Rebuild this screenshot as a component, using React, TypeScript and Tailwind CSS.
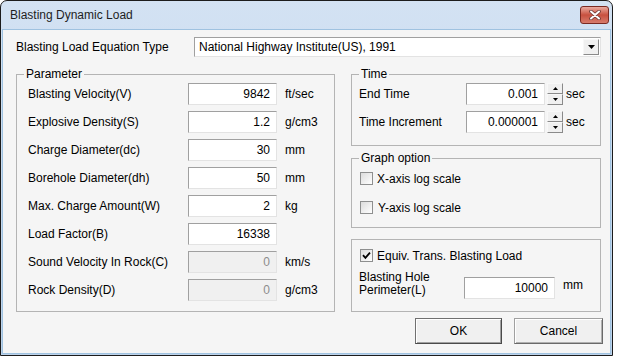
import React from "react";

const sunken =
  "border border-t-[#a0a0a0] border-l-[#a0a0a0] border-r-[#e3e3e3] border-b-[#e3e3e3]";
const raised =
  "border border-t-[#f8f8f8] border-l-[#f8f8f8] border-r-[#8a8a8a] border-b-[#8a8a8a]";

function Field({
  value,
  disabled,
  w,
}: {
  value: string;
  disabled?: boolean;
  w: string;
}) {
  return (
    <div
      className={`${sunken} ${w} h-[22px] flex items-center justify-end pr-[6px] ${
        disabled ? "bg-[#f0f0f0] text-[#8c8c8c]" : "bg-white text-black"
      }`}
    >
      {value}
    </div>
  );
}

function Group({
  label,
  className,
  children,
}: {
  label?: string;
  className: string;
  children: React.ReactNode;
}) {
  return (
    <div className={`relative border border-[#b4b4b4] ${className}`}>
      {label && (
        <span className="absolute -top-[8px] left-[7px] px-[2px] bg-[#f5f5f5] leading-[14px]">
          {label}
        </span>
      )}
      {children}
    </div>
  );
}

function Check({ checked }: { checked?: boolean }) {
  return (
    <span className="w-[13px] h-[13px] border border-[#8e8f8f] bg-linear-to-br from-[#dcdcdc] to-[#ffffff] flex items-center justify-center shrink-0">
      {checked && (
        <svg width="9" height="9" viewBox="0 0 9 9">
          <path d="M1 4.2 L3.4 6.8 L8 1.6" fill="none" stroke="#000" strokeWidth="1.8" />
        </svg>
      )}
    </span>
  );
}

function Spinner() {
  return (
    <div className="flex flex-col w-[16px] h-[22px] ml-[2px]">
      <div className={`${raised} bg-[#f0f0f0] h-[11px] flex items-center justify-center`}>
        <svg width="5" height="3" viewBox="0 0 5 3">
          <path d="M0 3 L2.5 0 L5 3 Z" fill="#000" />
        </svg>
      </div>
      <div className={`${raised} bg-[#f0f0f0] h-[11px] flex items-center justify-center`}>
        <svg width="5" height="3" viewBox="0 0 5 3">
          <path d="M0 0 L5 0 L2.5 3 Z" fill="#000" />
        </svg>
      </div>
    </div>
  );
}

const rows: { label: string; value: string; unit: string; disabled?: boolean }[] = [
  { label: "Blasting Velocity(V)", value: "9842", unit: "ft/sec" },
  { label: "Explosive Density(S)", value: "1.2", unit: "g/cm3" },
  { label: "Charge Diameter(dc)", value: "30", unit: "mm" },
  { label: "Borehole Diameter(dh)", value: "50", unit: "mm" },
  { label: "Max. Charge Amount(W)", value: "2", unit: "kg" },
  { label: "Load Factor(B)", value: "16338", unit: "" },
  { label: "Sound Velocity In Rock(C)", value: "0", unit: "km/s", disabled: true },
  { label: "Rock Density(D)", value: "0", unit: "g/cm3", disabled: true },
];

export default function App() {
  return (
    <div className="w-[617px] h-[358px] bg-white font-['Liberation_Sans',Arial,sans-serif] text-[12px] text-black leading-[14px]">
      <div className="w-[613px] h-[356px] border border-[#1c1c1c] rounded-t-[7px] bg-linear-to-b from-[#d3e2f3] to-[#bcd2ea] flex flex-col">
        {/* Title bar */}
        <div className="h-[28px] flex items-center justify-between pl-[9px] pr-[3px]">
          <span className="text-[12px] text-[#1e1e1e]">Blasting Dynamic Load</span>
          <div className="w-[29px] h-[18px] rounded-[3px] border border-[#7a2a22] bg-linear-to-b from-[#e9aaa0] via-[#c8503f] to-[#d77b6c] flex items-center justify-center">
            <svg width="12" height="10" viewBox="0 0 12 10">
              <path d="M2 1.5 L10 8.5 M10 1.5 L2 8.5" stroke="#6b3a35" strokeWidth="3.6" strokeLinecap="round" />
              <path d="M2 1.5 L10 8.5 M10 1.5 L2 8.5" stroke="#ffffff" strokeWidth="2" strokeLinecap="round" />
            </svg>
          </div>
        </div>

        {/* Client area */}
        <div className="flex-1 mx-[1px] mb-[1px] border border-[#9fc2e0] bg-[#f5f5f5] pl-[13px] pt-[7px]">
          {/* Equation type */}
          <div className="flex items-center">
            <span className="w-[178px]">Blasting Load Equation Type</span>
            <div className={`${sunken} bg-white w-[407px] h-[20px] flex items-center justify-between pl-[4px] pr-[1px]`}>
              <span>National Highway Institute(US), 1991</span>
              <div className={`${raised} bg-[#f0f0f0] w-[16px] h-[16px] flex items-center justify-center`}>
                <svg width="7" height="4" viewBox="0 0 7 4">
                  <path d="M0 0 L7 0 L3.5 4 Z" fill="#000" />
                </svg>
              </div>
            </div>
          </div>

          <div className="flex items-start mt-[17px] gap-[16px]">
            {/* Parameter */}
            <Group label="Parameter" className="w-[319px] h-[238px]">
              <div className="flex flex-col gap-[6px] pt-[8px] pl-[11px]">
                {rows.map((r) => (
                  <div key={r.label} className="flex items-center h-[22px]">
                    <span className="w-[160px]">{r.label}</span>
                    <Field value={r.value} disabled={r.disabled} w="w-[89px]" />
                    <span className="ml-[8px]">{r.unit}</span>
                  </div>
                ))}
              </div>
            </Group>

            {/* Right column */}
            <div className="w-[250px] flex flex-col">
              <Group label="Time" className="h-[72px]">
                <div className="flex flex-col gap-[6px] pt-[8px] pl-[7px]">
                  <div className="flex items-center h-[22px]">
                    <span className="w-[107px]">End Time</span>
                    <Field value="0.001" w="w-[79px]" />
                    <Spinner />
                    <span className="ml-[3px]">sec</span>
                  </div>
                  <div className="flex items-center h-[22px]">
                    <span className="w-[107px]">Time Increment</span>
                    <Field value="0.000001" w="w-[79px]" />
                    <Spinner />
                    <span className="ml-[3px]">sec</span>
                  </div>
                </div>
              </Group>

              <Group label="Graph option" className="h-[70px] mt-[12px]">
                <div className="flex flex-col gap-[16px] pt-[13px] pl-[8px]">
                  <div className="flex items-center h-[13px] gap-[4px]">
                    <Check />
                    <span>X-axis log scale</span>
                  </div>
                  <div className="flex items-center h-[13px] gap-[5px]">
                    <Check />
                    <span>Y-axis log scale</span>
                  </div>
                </div>
              </Group>

              <Group className="h-[73px] mt-[11px]">
                <div className="flex flex-col pt-[9px] pl-[8px]">
                  <div className="flex items-center h-[13px] gap-[4px]">
                    <Check checked />
                    <span>Equiv. Trans. Blasting Load</span>
                  </div>
                  <div className="flex items-start mt-[9px] -ml-[1px]">
                    <div className="w-[105px] leading-[13px] flex flex-col">
                      <span>Blasting Hole</span>
                      <span>Perimeter(L)</span>
                    </div>
                    <div className="mt-[6px]">
                      <Field value="10000" w="w-[91px]" />
                    </div>
                    <span className="ml-[8px] mt-[7px]">mm</span>
                  </div>
                </div>
              </Group>

              <div className="flex justify-end gap-[12px] mt-[6px] -mr-[2px]">
                <button className="w-[87px] h-[26px] border border-[#707070] border-r-[#4a4a4a] border-b-[#4a4a4a] bg-[#f0f0f0] shadow-[inset_1px_1px_0_#ffffff,inset_-1px_-1px_0_#a0a0a0]">
                  OK
                </button>
                <button className="w-[89px] h-[26px] border border-[#a0a0a0] border-r-[#6a6a6a] border-b-[#6a6a6a] bg-[#f0f0f0] shadow-[inset_1px_1px_0_#ffffff,inset_-1px_-1px_0_#b0b0b0]">
                  Cancel
                </button>
              </div>
            </div>
          </div>
        </div>
      </div>
    </div>
  );
}
